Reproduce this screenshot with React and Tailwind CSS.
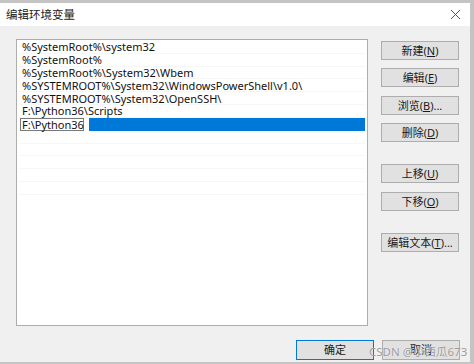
import React from "react";

const font = { fontFamily: '"Noto Sans", "Noto Sans CJK SC", sans-serif' };

function Btn({ label, acc, suffix = "", cls = "" }) {
  return (
    <div className={"w-[78px] h-[19px] border border-[#adadad] bg-[#e1e1e1] flex items-center justify-center text-[11px] text-[#1a1a1a] leading-none " + cls}>
      <span>
        {label}(<span className="underline">{acc}</span>){suffix}
      </span>
    </div>
  );
}

export default function App() {
  const rows = [
    "%SystemRoot%\\system32",
    "%SystemRoot%",
    "%SystemRoot%\\System32\\Wbem",
    "%SYSTEMROOT%\\System32\\WindowsPowerShell\\v1.0\\",
    "%SYSTEMROOT%\\System32\\OpenSSH\\",
    "F:\\Python36\\Scripts",
  ];
  return (
    <div className="w-[474px] h-[364px] bg-[#f0f0f0] border-t-[3px] border-r-[4px] border-b-[2px] border-[#c4c4c4] flex flex-col relative overflow-hidden" style={font}>
      <div className="h-[23px] bg-white flex items-center justify-between pl-[6px] pr-[8px] shrink-0">
        <span className="text-[11.5px] text-[#222]">编辑环境变量</span>
        <svg width="11" height="11" viewBox="0 0 11 11" className="mr-[1px]">
          <path d="M1 1 L10 10 M10 1 L1 10" stroke="#555" strokeWidth="1" />
        </svg>
      </div>
      <div className="flex pl-[16px] pt-[13px]">
        <div className="w-[352px] h-[287px] bg-white border border-[#adadad] pt-[1px] px-[2px] flex flex-col">
          {rows.map((r) => (
            <div key={r} className="h-[12.8px] shrink-0 flex items-center pl-[3px] text-[11px] text-[#111] border-b border-[#f6f6f6] leading-[11px] whitespace-nowrap">
              {r}
            </div>
          ))}
          <div className="h-[13px] shrink-0 flex items-stretch">
            <div className="w-[64px] ml-[1px] border border-[#7a7a7a] bg-white flex items-center pl-[1px] text-[11px] text-[#111] leading-[11px]">F:\Python36</div>
            <div className="w-[5px] bg-white" />
            <div className="flex-1 bg-[#0078d7]" />
          </div>
          {[0, 1, 2, 3, 4].map((i) => (
            <div key={i} className="h-[12.8px] shrink-0 border-b border-[#f6f6f6]" />
          ))}
        </div>
        <div className="ml-[13px] pt-[2px] flex flex-col">
          <Btn label="新建" acc="N" />
          <Btn label="编辑" acc="E" cls="mt-[8px]" />
          <Btn label="浏览" acc="B" suffix="..." cls="mt-[9px]" />
          <Btn label="删除" acc="D" cls="mt-[8px]" />
          <Btn label="上移" acc="U" cls="mt-[22px]" />
          <Btn label="下移" acc="O" cls="mt-[9px]" />
          <Btn label="编辑文本" acc="T" suffix="..." cls="mt-[22px]" />
        </div>
      </div>
      <div className="flex justify-end gap-[8px] pr-[10px] mt-[14px]">
        <div className="w-[78px] h-[20px] border border-[#0078d7] bg-[#e1e1e1] flex items-center justify-center text-[11px] text-[#1a1a1a]">确定</div>
        <div className="w-[78px] h-[20px] border border-[#adadad] bg-[#e1e1e1] flex items-center justify-center text-[11px] text-[#1a1a1a]">取消</div>
      </div>
      <div className="absolute left-[369px] top-[343px] text-[11.5px] text-[#9a9a9a] leading-none whitespace-nowrap" style={{ textShadow: "0 0 1px #fff" }}>
        CSDN @小西瓜673
      </div>
    </div>
  );
}
